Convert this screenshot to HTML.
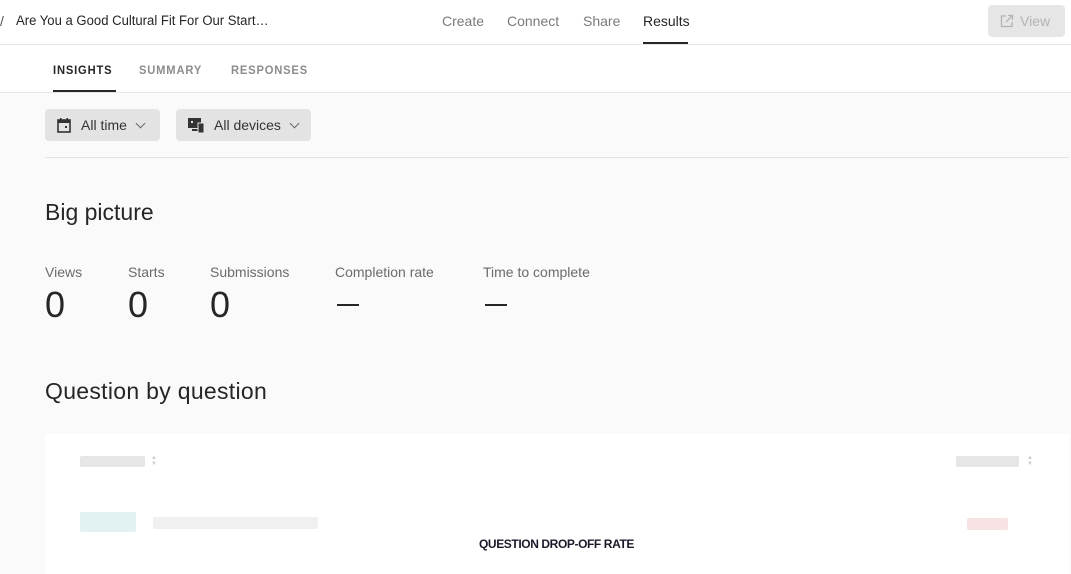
<!DOCTYPE html>
<html><head><meta charset="utf-8"><style>
*{margin:0;padding:0;box-sizing:border-box}
body{width:1071px;height:574px;overflow:hidden;background:#fafafa;font-family:"Liberation Sans",sans-serif;color:#262627;position:relative}
.abs{position:absolute}
.top{left:0;top:0;width:1071px;height:45px;background:#fff;border-bottom:1px solid #e6e6e6}
.tabs{left:0;top:45px;width:1071px;height:48px;background:#fff;border-bottom:1px solid #e6e6e6}
.nav{font-size:14px;top:13px;color:#7a7a7a}
.tab{font-size:12px;letter-spacing:0.9px;top:63px;color:#8c8c8c;font-weight:bold;transform:scaleX(0.93);transform-origin:left}
.btn{background:#e3e3e3;border-radius:4px;height:32px;top:109px;font-size:14px;line-height:32px;color:#333}
.lab{font-size:14px;color:#6b6b6b;top:264px}
.num{font-size:36px;font-weight:300;top:284px;color:#262627}
.dash{top:304px;height:2px;width:22px;background:#262627}
.g{background:#e6e6e6;border-radius:2px}
</style></head><body>
<div class="abs top"></div>
<div class="abs" style="left:0;top:13px;font-size:14px;color:#555">/</div>
<div class="abs" style="left:16px;top:13px;font-size:13.5px;color:#262627;transform:scaleX(0.97);transform-origin:left">Are You a Good Cultural Fit For Our Start…</div>
<div class="abs nav" style="left:442px">Create</div>
<div class="abs nav" style="left:507px">Connect</div>
<div class="abs nav" style="left:583px">Share</div>
<div class="abs nav" style="left:643px;color:#262627">Results</div>
<div class="abs" style="left:643px;top:42px;width:45px;height:2px;background:#262627"></div>
<div class="abs" style="left:988px;top:5px;width:77px;height:32px;background:#e6e6e6;border-radius:4px;color:#b3b3b3;font-size:14px;line-height:32px;padding-left:12px">
<svg width="14" height="14" viewBox="0 0 14 14" style="vertical-align:-2px;margin-right:6px" fill="none" stroke="#b3b3b3" stroke-width="1.3"><path d="M6 2H1.5v10.5H12V8M8 1.5h4.5V6M12.5 1.5L6 8"/></svg>View</div>
<div class="abs tabs"></div>
<div class="abs tab" style="left:53px;color:#262627">INSIGHTS</div>
<div class="abs" style="left:53px;top:90px;width:63px;height:2px;background:#262627"></div>
<div class="abs tab" style="left:139px">SUMMARY</div>
<div class="abs tab" style="left:231px">RESPONSES</div>
<div class="abs btn" style="left:45px;width:115px;padding-left:12px">
<svg width="14" height="16" viewBox="0 0 14 16" style="vertical-align:-3px;margin-right:10px"><rect x="1" y="3" width="12" height="12" fill="none" stroke="#333" stroke-width="1.6"/><rect x="1" y="3" width="12" height="3" fill="#333"/><rect x="3" y="1" width="1.6" height="3" fill="#333"/><rect x="9.4" y="1" width="1.6" height="3" fill="#333"/><rect x="8" y="9" width="2" height="2" fill="#333"/></svg>All time<span style="display:inline-block;width:7px;height:7px;border-right:1.5px solid #666;border-bottom:1.5px solid #666;transform:rotate(45deg);margin-left:10px;vertical-align:3px"></span></div>
<div class="abs btn" style="left:176px;width:135px;padding-left:12px">
<svg width="17" height="16" viewBox="0 0 17 16" style="vertical-align:-3px;margin-right:9px"><rect x="0" y="1" width="13" height="10" fill="#333"/><rect x="4" y="12" width="6" height="2" fill="#333"/><rect x="10" y="6" width="6" height="10" fill="#333" stroke="#e3e3e3" stroke-width="1"/><rect x="3" y="4" width="2" height="2" fill="#e3e3e3"/></svg>All devices<span style="display:inline-block;width:7px;height:7px;border-right:1.5px solid #666;border-bottom:1.5px solid #666;transform:rotate(45deg);margin-left:10px;vertical-align:3px"></span></div>
<div class="abs" style="left:45px;top:157px;width:1024px;height:1px;background:#e3e3e3"></div>
<div class="abs" style="left:45px;top:199px;font-size:23px;font-weight:300">Big picture</div>
<div class="abs lab" style="left:45px">Views</div>
<div class="abs lab" style="left:128px">Starts</div>
<div class="abs lab" style="left:210px">Submissions</div>
<div class="abs lab" style="left:335px">Completion rate</div>
<div class="abs lab" style="left:483px">Time to complete</div>
<div class="abs num" style="left:45px">0</div>
<div class="abs num" style="left:128px">0</div>
<div class="abs num" style="left:210px">0</div>
<div class="abs dash" style="left:337px"></div>
<div class="abs dash" style="left:485px"></div>
<div class="abs" style="left:45px;top:378px;font-size:23px;font-weight:300;letter-spacing:0.3px">Question by question</div>
<div class="abs" style="left:45px;top:434px;width:1024px;height:140px;background:#fff"></div>
<div class="abs g" style="left:80px;top:456px;width:65px;height:11px"></div>
<div class="abs" style="left:151px;top:455px;font-size:6px;color:#ccc;line-height:6px">▲<br>▼</div>
<div class="abs g" style="left:956px;top:456px;width:63px;height:11px"></div>
<div class="abs" style="left:1027px;top:455px;font-size:6px;color:#ccc;line-height:6px">▲<br>▼</div>
<div class="abs" style="left:80px;top:512px;width:56px;height:20px;background:#e2f1f1;border-radius:2px"></div>
<div class="abs" style="left:153px;top:517px;width:165px;height:12px;background:#f0f0f0;border-radius:2px"></div>
<div class="abs" style="left:967px;top:518px;width:41px;height:12px;background:#f8e2e4;border-radius:2px"></div>
<div class="abs" style="left:479px;top:537px;font-size:12px;font-weight:bold;color:#1a1a2a;letter-spacing:-0.4px">QUESTION DROP-OFF RATE</div>
</body></html>
